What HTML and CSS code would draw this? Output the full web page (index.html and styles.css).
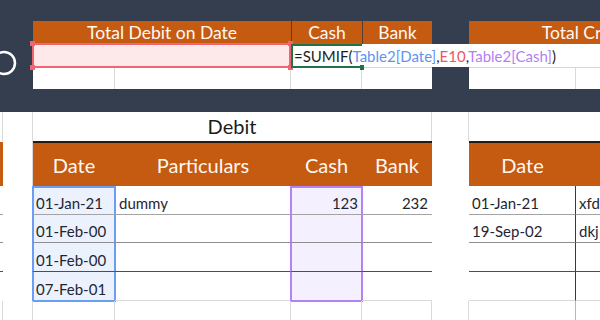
FILE: index.html
```html
<!DOCTYPE html>
<html>
<head>
<meta charset="utf-8">
<link rel="stylesheet" href="styles.css">
</head>
<body>
<div class="band">
  <svg class="ring" width="28" height="28" viewBox="0 0 28 28"><circle cx="14" cy="14" r="11" fill="none" stroke="#fff" stroke-width="2.5"/></svg>
  <div class="ttable t1">
    <div class="th span2">Total Debit on Date</div>
    <div class="th sep">Cash</div>
    <div class="th sep">Bank</div>
    <div class="pink"><span class="h tl"></span><span class="h tr"></span><span class="h bl"></span><span class="h br"></span></div>
    <div class="tc"></div>
    <div class="tc"></div>
    <div class="tc r3 gl"></div>
    <div class="tc r3 gl"></div>
    <div class="tc r3 gl"></div>
    <div class="tc r3"></div>
  </div>
  <div class="ttable t2">
    <div class="th span2">Total Credit on Date</div>
    <div class="tc"></div>
    <div class="tc"></div>
    <div class="tc r3 gl"></div>
    <div class="tc r3"></div>
  </div>
  <div class="editor">
    <div class="active"><span class="gh"></span></div>
    <span class="f-op">=SUMIF(</span><span class="f-blue">Table2[Date]</span><span class="f-op">,</span><span class="f-red">E10</span><span class="f-op">,</span><span class="f-purple">Table2[Cash]</span><span class="f-op">)</span>
  </div>
</div>

<div class="sheet">
  <!-- row 0: titles -->
  <div class="c gl"></div>
  <div class="c gl"></div>
  <div class="c title gl">Debit</div>
  <div class="c gl"></div>
  <div class="c title2"></div>

  <!-- row 1: headers -->
  <div class="c hd-stub"></div>
  <div class="c gl"></div>
  <div class="c hd">Date</div>
  <div class="c hd">Particulars</div>
  <div class="c hd">Cash</div>
  <div class="c hd">Bank</div>
  <div class="c"></div>
  <div class="c hd">Date</div>
  <div class="c hd"></div>

  <!-- row 2 -->
  <div class="c b1"></div>
  <div class="c"></div>
  <div class="c b1 txt blue first">01-Jan-21</div>
  <div class="c b1 txt pl">dummy</div>
  <div class="c b1 txt num purple first">123</div>
  <div class="c b1 txt num">232</div>
  <div class="c"></div>
  <div class="c b1 txt vr">01-Jan-21</div>
  <div class="c b1 txt">xfd</div>

  <!-- row 3 -->
  <div class="c b2"></div>
  <div class="c"></div>
  <div class="c b2 txt blue">01-Feb-00</div>
  <div class="c b2 txt pl"></div>
  <div class="c b2 txt num purple"></div>
  <div class="c b2 txt num"></div>
  <div class="c"></div>
  <div class="c b2 txt vr">19-Sep-02</div>
  <div class="c b2 txt">dkj</div>

  <!-- row 4 -->
  <div class="c b3"></div>
  <div class="c"></div>
  <div class="c b3 txt blue">01-Feb-00</div>
  <div class="c b3 txt pl"></div>
  <div class="c b3 txt num purple"></div>
  <div class="c b3 txt num"></div>
  <div class="c"></div>
  <div class="c b3 txt vr"></div>
  <div class="c b3 txt"></div>

  <!-- row 5 -->
  <div class="c"></div>
  <div class="c"></div>
  <div class="c txt blue last">07-Feb-01</div>
  <div class="c b4 txt pl"></div>
  <div class="c txt num purple last"></div>
  <div class="c b4 txt num"></div>
  <div class="c"></div>
  <div class="c b4 txt vr"></div>
  <div class="c b4 txt"></div>

  <!-- row 6 -->
  <div class="c gl"></div>
  <div class="c gl"></div>
  <div class="c gl"></div>
  <div class="c gl"></div>
  <div class="c gl"></div>
  <div class="c gl"></div>
  <div class="c gl"></div>
  <div class="c gl vrl"></div>
  <div class="c"></div>
</div>
</body>
</html>
```

FILE: styles.css
```css
html, body {
  margin: 0;
  padding: 0;
}
body {
  width: 600px;
  height: 320px;
  overflow: hidden;
  background: #fff;
  font-family: Lato, "Open Sans", sans-serif;
  color: #1f2329;
}

/* ---------- dark band with the summary tables ---------- */
.band {
  position: relative;
  box-sizing: border-box;
  height: 112px;
  background: #343e4e;
  display: flex;
  align-items: flex-start;
  gap: 37px;
  padding: 21px 0 0 33px;
}
.ring {
  position: absolute;
  left: -10px;
  top: 49px;
}
.ttable {
  display: grid;
  grid-template-rows: 23px 23px 22px;
  flex: none;
}
.t1 {
  width: 399px;
  grid-template-columns: 82px 176px 71px 70px;
}
.t2 {
  width: 300px;
  grid-template-columns: 107px 193px;
}
.th {
  background: #c55a11;
  color: #fff8f2;
  font-size: 17.5px;
  display: flex;
  align-items: center;
  justify-content: center;
  white-space: nowrap;
}
.th.sep {
  border-left: 1px solid #5a3d2c;
}
.span2 {
  grid-column: span 2;
}
.tc {
  background: #fff;
}
.r3 {
  border-top: 1px solid #d6d6d6;
}
.gl {
  border-right: 1px solid #d9d9d9;
}
.pink {
  grid-column: span 2;
  position: relative;
  background: #fde9ea;
  border: 2px solid #f2646f;
  margin: -1px 0 -1px -1px;
}
.h {
  position: absolute;
  width: 5px;
  height: 5px;
  background: #f2646f;
}
.h.tl { left: -4px; top: -4px; }
.h.tr { right: -4px; top: -4px; }
.h.bl { left: -4px; bottom: -4px; }
.h.br { right: -4px; bottom: -4px; }

/* the in-cell formula editor that overflows to the right */
.editor {
  position: absolute;
  left: 291px;
  top: 44px;
  width: 309px;
  height: 23px;
  box-sizing: border-box;
  background: #fff;
  padding: 4px 0 0 3px;
  font-size: 15px;
  line-height: 17px;
  white-space: nowrap;
}
.active {
  position: absolute;
  left: 0;
  top: 0;
  width: 71px;
  height: 24px;
  box-sizing: border-box;
  border: 2px solid #217346;
  border-right: none;
}
.gh {
  position: absolute;
  right: -2px;
  bottom: -4px;
  width: 4px;
  height: 5px;
  background: #217346;
}
.f-op { color: #1e1e1e; }
.f-blue { color: #5f93ef; }
.f-red { color: #ee5560; }
.f-purple { color: #b47ff2; }

/* ---------- worksheet ---------- */
.sheet {
  display: grid;
  grid-template-columns: 3px 30px 82px 176px 71px 70px 37px 107px 24px;
  grid-template-rows: 29px 45px 29px 28px 29px 29px 19px;
}
.c {
  box-sizing: border-box;
  min-width: 0;
  overflow: hidden;
  white-space: nowrap;
}
.title {
  grid-column: span 4;
  display: flex;
  align-items: center;
  justify-content: center;
  font-size: 20px;
  color: #1b1b1b;
  padding-bottom: 1px;
}
.title2 {
  grid-column: span 2;
}
.hd-stub {
  background: #c55a11;
  margin-top: 1px;
}
.hd {
  background: #c55a11;
  border-top: 2px solid #231a14;
  color: #fff8f2;
  font-size: 20px;
  display: flex;
  align-items: center;
  justify-content: center;
}
.txt {
  display: flex;
  align-items: flex-end;
  font-size: 15px;
  line-height: 17px;
  padding: 0 3px 2px 3px;
  color: #1f2632;
}
.pl { padding-left: 4px; }
.num {
  justify-content: flex-end;
  padding-right: 4px;
}
.b1 { border-bottom: 1px solid #a3a3a3; }
.b2 { border-bottom: 1px solid #8e8e8e; }
.b3 { border-bottom: 1px solid #4e4e4e; }
.b4 { border-bottom: 1px solid #d9d9d9; }
.vr { border-right: 1px solid #3a3a3a; }
.vrl { border-right-color: #b8b8b8; }

/* selected ranges: coloured fill with a 2px outline drawn by the cells */
.blue, .purple {
  margin: 0 -1px;
  border-left: 2px solid;
  border-right: 2px solid;
  padding-left: 2px;
}
.blue { background: #ebf2fe; border-left-color: #6b9df5; border-right-color: #6b9df5; }
.purple { background: #f5f0fe; border-left-color: #b482f6; border-right-color: #b482f6; padding-right: 3px; }
.first { border-top: 2px solid; }
.blue.first { border-top-color: #6b9df5; }
.purple.first { border-top-color: #b482f6; }
.last { border-bottom: 2px solid; margin-bottom: -1px; }
.blue.last { border-bottom-color: #6b9df5; }
.purple.last { border-bottom-color: #b482f6; }
```
